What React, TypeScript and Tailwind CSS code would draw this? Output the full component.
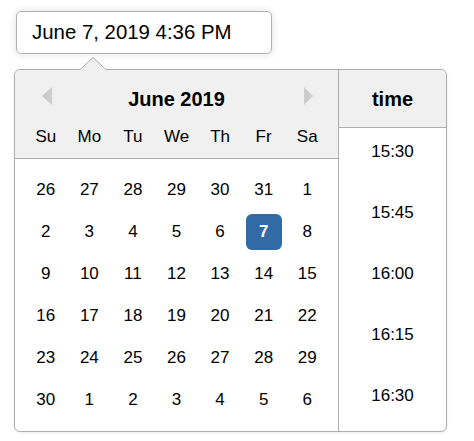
const weeks: number[][] = [
  [26, 27, 28, 29, 30, 31, 1],
  [2, 3, 4, 5, 6, 7, 8],
  [9, 10, 11, 12, 13, 14, 15],
  [16, 17, 18, 19, 20, 21, 22],
  [23, 24, 25, 26, 27, 28, 29],
  [30, 1, 2, 3, 4, 5, 6],
];

const dayNames = ["Su", "Mo", "Tu", "We", "Th", "Fr", "Sa"];
const times = ["15:30", "15:45", "16:00", "16:15", "16:30"];

const App: React.FC = () => {
  return (
    <div
      className="min-h-[441px] bg-white pl-[16px] pt-[11px] text-black"
      style={{ fontFamily: '"Liberation Sans", Arial, sans-serif' }}
    >
      {/* Input */}
      <div className="flex h-[43px] w-[256px] items-center rounded-[5px] border border-[#b0b0b0] px-[15px] text-[20.4px] shadow-[0_0_8px_rgba(0,0,0,0.12)]">
        June 7, 2019 4:36 PM
      </div>

      {/* Popup */}
      <div className="relative ml-[-2px] mt-[15px] flex w-[433px] rounded-[6px] border border-[#aeaeae] bg-white shadow-[0_1px_3px_rgba(0,0,0,0.08)]">
        {/* pointer triangle */}
        <svg
          className="absolute left-[64px] top-[-13px]"
          width="28"
          height="14"
          viewBox="0 0 28 14"
        >
          <polygon points="0,13.5 14,0.5 28,13.5" fill="#f0f0f0" />
          <polyline
            points="0,13.5 14,0.5 28,13.5"
            fill="none"
            stroke="#aeaeae"
            strokeWidth="1"
          />
        </svg>

        {/* Month */}
        <div className="w-[323px]">
          <div className="relative rounded-tl-[6px] border-b border-[#aeaeae] bg-[#f0f0f0] px-[9px] pb-[11px] pt-[17px]">
            <svg
              className="absolute left-[27px] top-[17px]"
              width="10"
              height="18"
              viewBox="0 0 10 18"
            >
              <polygon points="10,0 0,9 10,18" fill="#cccccc" />
            </svg>
            <svg
              className="absolute right-[25px] top-[17px]"
              width="9"
              height="18"
              viewBox="0 0 9 18"
            >
              <polygon points="0,0 9,9 0,18" fill="#cccccc" />
            </svg>
            <div className="text-center text-[20px] font-bold leading-[24px]">
              June 2019
            </div>
            <div className="mt-[16px] grid grid-cols-7">
              {dayNames.map((d) => (
                <div key={d} className="text-center text-[17px] leading-[20px]">
                  {d}
                </div>
              ))}
            </div>
          </div>

          <div className="px-[9px] py-[10px]">
            {weeks.map((week, i) => (
              <div key={i} className="grid h-[42px] grid-cols-7">
                {week.map((day, j) => (
                  <div key={j} className="flex items-center justify-center">
                    {i === 1 && j === 5 ? (
                      <span className="flex h-[36px] w-[36px] items-center justify-center rounded-[6px] bg-[#316aa4] text-[17px] font-bold text-white">
                        {day}
                      </span>
                    ) : (
                      <span className="text-[17px]">{day}</span>
                    )}
                  </div>
                ))}
              </div>
            ))}
          </div>
        </div>

        {/* Time */}
        <div className="flex w-[108px] flex-col border-l border-[#aeaeae]">
          <div className="flex h-[58px] items-center justify-center rounded-tr-[6px] border-b border-[#aeaeae] bg-[#f0f0f0] text-[20px] font-bold">
            time
          </div>
          <div className="flex-1 overflow-hidden">
            <div className="mt-[-7px]">
              {times.map((t) => (
                <div
                  key={t}
                  className="flex h-[61px] items-center justify-center text-[17px]"
                >
                  {t}
                </div>
              ))}
            </div>
          </div>
        </div>
      </div>
    </div>
  );
};

export default App;
